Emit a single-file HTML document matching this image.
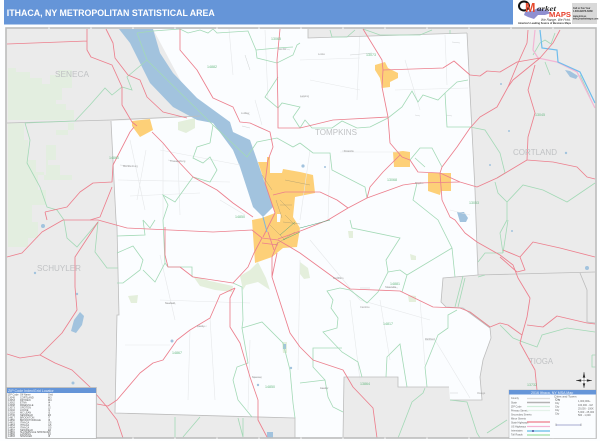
<!DOCTYPE html>
<html><head><meta charset="utf-8"><style>
html,body{margin:0;padding:0;background:#fff;width:600px;height:441px;overflow:hidden}
svg{display:block;filter:blur(.3px)}
text{font-family:"Liberation Sans",sans-serif}
</style></head><body>
<svg width="600" height="441" viewBox="0 0 600 441" xmlns="http://www.w3.org/2000/svg">
<rect width="600" height="441" fill="#fdfeff"/>
<rect x="4" y="0" width="509" height="24.5" fill="#6595d8"/>
<text x="6.8" y="16" font-size="9" font-weight="bold" fill="#fff" textLength="208" lengthAdjust="spacingAndGlyphs">ITHACA, NY METROPOLITAN STATISTICAL AREA</text>
<!-- map base -->
<rect x="6" y="28" width="590" height="410" fill="#ebebeb"/>
<!-- forests on gray -->
<path d="M8,68H16V72H30V78H42V84H50V75H58V70H72V88H62V100H56V104H66V110H74V120H8Z" fill="#e3eee0"/>
<path d="M8,123H24V140H28V160H36V172H44V180H72V175H60V165H48V160H56V135H68V123H74V130H56V145H46V175H38V190H46V205H32V222H8Z" fill="#e3eee0"/>
<path d="M8,222H38V238H28V247H8Z" fill="#e3eee0"/>
<!-- MSA white -->
<path id="msa" d="M153,29 308,29 308,38 467,33 470,100 475,190 476,220 478,275 443,278 441,302 446,307 463,308 490,328 491,338 483,360 480,377 482,400 450,400 449,387 398,387 398,377 344,377 343,438 295,438 295,418 115,413 117,315 119,315 117,227 116,220 111,121 190,117 200,117Z" fill="#fbfdff"/>
<!-- forests in MSA -->
<g fill="#e4efdc">
<path d="M178,122 195,118 195,128 186,133 178,130Z"/>
<path d="M193,276 210,281 233,286 232,292 215,290 200,286Z"/>
<path d="M128,296 138,295 137,303 131,303Z"/>
<path d="M240,276 250,270 258,262 266,278 270,290 258,282 246,285 243,290Z"/>
<path d="M300,262 308,268 310,278 304,279 300,274Z"/>
<path d="M348,231 353,231 353,238 349,238Z"/>
<path d="M408,295 416,296 416,302 409,302Z"/>
<path d="M410,254 416,256 416,260 411,260Z"/>
<path d="M282,342 287,342 287,353 283,353Z"/>
</g>
<!-- urban -->
<g fill="#fdd078">
<path d="M258,162 267,162 267,157 270,157 270,173 282,173 283,169 300,172 313,175 315,193 295,197 293,217 300,228 297,247 283,248 272,257 255,263 252,220 262,218 275,213Z"/>
<path d="M375,65 385,62 388,68 398,73 398,78 390,82 390,87 382,88 380,78 375,70Z"/>
<path d="M393,152 403,151 410,152 410,167 394,167Z"/>
<path d="M428,173 451,173 451,191 441,191 440,195 428,191Z"/>
<path d="M132,121 150,119 153,130 140,137 132,126Z"/>
</g>
<path d="M277,214 281,214 280,222 277,222Z" fill="#fbfdff"/>
<!-- water -->
<g fill="#a2c3de">
<path d="M119,29 153,29 160,53 173,73 197,98 230,122 233,132 250,140 258,163 273,207 263,217 253,207 240,167 233,150 213,123 197,120 173,107 150,83 130,43Z"/>
<path d="M80,312 84,316 82,325 76,333 71,331 74,320Z"/>
<path d="M457,212 464,212 468,218 466,222 460,222Z"/>
<path d="M267,432 273,432 273,438 267,438Z"/>
<path d="M565,70 570,71 578,76 576,79 570,77Z"/>
<path d="M283,344 286,344 286,349 283,349Z"/>
<circle cx="303" cy="166" r="1.6"/><circle cx="325" cy="167" r="1"/><circle cx="512" cy="231" r="1"/><circle cx="566" cy="153" r="1.2"/><circle cx="587" cy="268" r="2"/><circle cx="172" cy="341" r="1.5"/><circle cx="258" cy="385" r="1.2"/><circle cx="291" cy="368" r="1.2"/><circle cx="43" cy="226" r="2"/><circle cx="35" cy="273" r="1.2"/><circle cx="73" cy="383" r="1.5"/><circle cx="77" cy="294" r="1.2"/><circle cx="501" cy="84" r="1"/><circle cx="490" cy="165" r="1"/><circle cx="509" cy="131" r="1"/><circle cx="528" cy="420" r=".8"/>
</g>
<!-- minor roads -->
<g fill="none" stroke="#e6e8ea" stroke-width=".6">
<path d="M229,29 233,75 M146,150 137,200 M163,143 163,220 M178,160 180,215 M118,180 230,182 M130,196 200,193 M300,60 360,58 M360,30 357,100 M395,90 468,88 M310,80 360,90 M405,60 420,110 M445,35 447,85 M310,150 300,220 M330,155 328,220 M340,152 400,152 M450,210 470,215 M160,300 250,303 M190,330 188,400 M210,318 215,400 M160,255 175,320 M125,345 170,345 M250,340 248,410 M300,260 298,370 M350,300 360,380 M420,300 425,365 M380,300 390,360 M435,340 470,398 M360,300 430,320 M310,240 360,300 M265,30 268,100 M255,100 262,125 M130,140 145,210 M160,150 240,165 M220,200 245,215"/>
</g>
<g fill="none" stroke="#c4c6c8" stroke-width=".4">
<path d="M245,55 250,70 M283,48 290,50 M245,113 250,115 M350,55 372,53 M452,42 460,43 M120,165 130,166 M168,160 178,162 M242,126 250,128 M258,127 268,131 M165,303 176,304 M197,327 207,326 M252,377 262,378 M337,277 341,278 M360,288 370,288 M387,287 398,288 M425,340 435,340 M450,393 458,393 M320,388 328,389 M415,115 420,116 M446,115 452,116 M342,151 350,151 M415,183 420,184 M300,97 305,97"/>
</g>
<!-- county lines -->
<g fill="none" stroke="#bdbdbd" stroke-width=".8">
<path d="M7,123 111,120 200,116"/>
<path d="M111,121 116,220 117,227 119,315 117,315 115,413 295,418 295,438"/>
<path d="M308,29 308,38 467,33"/>
<path d="M467,33 475,190 476,220 478,275 595,272"/>
<path d="M478,275 443,278 441,302 446,307 463,308 490,328 491,338 483,360 480,377 482,400 450,400"/>
<path d="M449,387 398,387 398,377 344,377 343,438"/>
<path d="M580,273 587,290 587,322 595,323"/>
</g>
<!-- green zip lines -->
<g fill="none" stroke="#a3d9b6" stroke-width=".8">
<path d="M137,33 147,60 213,125 247,157 257,142 277,138 293,147 300,143"/>
<path d="M137,33 153,31 180,29 188,33 200,30 208,33 213,29 217,33 248,31 256,50 257,58 277,63 293,55 297,45 300,43 M256,50 277,48 293,47"/>
<path d="M278,77 265,97 278,108 282,103 300,107 293,117 300,128"/>
<path d="M25,123 75,121 90,105 105,88 112,95 122,87 132,90 127,77 147,60"/>
<path d="M25,123 30,140 27,163 40,187 47,207 57,210 64,220 67,238 77,247 98,222 95,252 107,268 118,268"/>
<path d="M117,253 133,246 143,260 140,270 123,283 117,283"/>
<path d="M143,220 145,235 117,236 M143,220 150,228 155,220"/>
<path d="M210,143 213,125 M210,143 197,147 193,158 203,163 210,157 217,170 210,182 193,177 175,202 163,195 168,205 163,220 165,263 155,282 143,270"/>
<path d="M168,267 192,267 192,277 M165,263 168,267"/>
<path d="M233,283 242,287 243,320 242,328 262,322 283,343 290,370 293,403 295,418"/>
<path d="M242,328 248,363 237,367 233,380 238,400 252,417"/>
<path d="M200,417 183,437 M175,417 175,438 M238,418 243,437 M243,418 243,437"/>
<path d="M330,30 332,37 347,37 355,30 M363,29 380,35 420,35 432,30 M450,30 450,34"/>
<path d="M468,80 457,82 445,93 438,100 423,95 418,102 412,91 402,107 388,118 370,127 357,128 342,121 332,128 312,128 305,120 300,128"/>
<path d="M445,93 447,127 470,127 485,130 500,153 505,173 497,178 M495,182 498,193 507,202 523,185 543,190 567,202 595,183 M507,202 507,220 500,233 503,253 508,220"/>
<path d="M300,143 313,153 330,153 332,170 365,187 367,198"/>
<path d="M410,160 420,148 432,148 442,167 M415,158 425,167"/>
<path d="M417,183 413,200 438,220 452,248 455,277 M485,275 478,277 M463,276 455,307 M533,55 540,43 545,40 551,44 555,33"/>
<path d="M350,220 352,228 400,238 386,260 388,272 378,292 367,303 350,290 340,288 327,291 333,300 331,308 338,318 337,328 323,332 342,352 358,362 362,377"/>
<path d="M388,272 400,270 407,275 402,292 M407,275 452,248"/>
<path d="M342,348 313,348 313,367 325,380 328,397 333,407 343,412 M325,380 300,383"/>
<path d="M386,377 387,357 400,344 407,387"/>
<path d="M425,367 438,335 448,328 448,315 457,310 M425,367 427,387"/>
<path d="M425,388 423,393 412,402 400,433 398,438 M450,400 467,402 477,433 480,438 M487,433 507,420 M465,278 458,307"/>
<path d="M500,325 513,338 523,342 537,347 542,335 567,328 595,332 M470,312 490,327"/>
<path d="M478,262 485,253 497,253 503,253"/>
<path d="M592,355 592,367 596,367 M592,355 596,355"/>
<path d="M580,75 590,97 M545,62 550,75"/>
</g>
<!-- highways pink/blue -->
<g fill="none" stroke-width="1.2">
<path d="M535,30 533,50 538,58 557,62 577,72 595,108" stroke="#f3b5d4"/>
<path d="M540,30 542,48 557,50 558,62 580,72 595,103" stroke="#6fbdec"/>
</g>
<!-- red roads -->
<g fill="none" stroke="#ec7f8d" stroke-width=".85" stroke-linejoin="round">
<path d="M7,44 87,41 M87,29 87,50 91,57 112,65 122,87 122,105 132,122 137,126"/>
<path d="M106,29 113,43 115,58 128,75 140,80 147,97 163,112 187,118"/>
<path d="M45,212 67,207 80,192 93,183 112,182 113,165 130,132 134,127 M45,212 47,220 M90,220 100,217 112,187"/>
<path d="M152,132 163,143 177,160 193,177 217,190 233,203 253,217"/>
<path d="M180,29 180,50 197,70 213,98 233,107 240,122 250,123 270,132 273,147 268,160"/>
<path d="M280,29 277,60 278,110 278,128 300,128 333,120 388,117"/>
<path d="M363,29 382,60 383,70 382,87 388,117 390,143 402,157"/>
<path d="M383,70 443,68 454,61 470,75 480,76 487,71 500,72 517,62 540,58"/>
<path d="M528,30 527,43 518,63 508,87 497,107 480,117 470,128 457,147 442,167 440,173 442,200 450,217 455,220 465,233 477,242 500,255 513,265 518,278 530,298 527,317 522,335 520,343 535,370 537,390"/>
<path d="M560,30 553,43 540,58 513,80 508,87"/>
<path d="M535,65 528,90 535,113 528,137 527,160 553,162 577,167 587,177 595,179"/>
<path d="M527,160 507,172 497,178 477,187 460,182 440,173 418,172 410,160 402,157"/>
<path d="M400,155 383,172 370,187 367,198 348,208 328,220 303,230 278,239 M300,192 320,192 337,200 348,208 M367,198 403,185 417,183 460,182"/>
<path d="M273,195 285,192 300,192 M268,160 265,183 273,207 275,213 263,237"/>
<path d="M262,238 278,240 290,247 300,253 333,277 350,289 400,291 433,307 460,308 470,312 490,327 500,323 508,325 522,335"/>
<path d="M503,250 520,257 525,270 517,272 500,257 M520,257 533,242 560,248 595,257"/>
<path d="M527,325 543,327 557,316 587,323 595,324"/>
<path d="M300,347 313,360 343,370 353,387 373,408 377,438"/>
<path d="M7,257 22,253 42,232 63,220 98,220 127,228 213,232 252,230 262,238"/>
<path d="M98,222 75,257 75,287 77,310 62,333 40,355 55,363 72,370 90,387 107,407 117,420 123,438"/>
<path d="M7,354 20,358 40,355"/>
<path d="M97,404 108,406 117,400 140,373 153,363 163,360 177,340 190,330 210,318 220,295 235,288"/>
<path d="M165,227 165,255 168,267 180,267 193,277 233,283 248,267 254,253 262,238 M235,288 230,298 230,327 240,343 250,377 258,400 258,420 267,437"/>
<path d="M278,242 272,257 272,277 277,253 M272,277 290,333 300,347"/>
<path d="M262,243 278,245 M268,232 274,250"/>
</g>
<!-- Ithaca detail -->
<g fill="none" stroke="#a99a70" stroke-width=".4"><path d="M280,200 290,210 M285,215 295,225 M270,225 285,240 M275,245 295,232 M283,222 300,224 M280,205 292,205 M276,200 282,218 M262,175 272,190 M285,180 310,185"/></g>
<g fill="none" stroke="#4fa37a" stroke-width=".5"><path d="M280,235 295,222 M283,240 300,232 M300,228 330,220"/></g>
<path d="M263,217 267,232" stroke="#7fb5dc" stroke-width="1" fill="none"/>
<!-- labels -->
<g fill="#c0c2c4" font-size="8">
<text x="55" y="77" textLength="34" lengthAdjust="spacingAndGlyphs">SENECA</text>
<text x="37" y="271" textLength="44" lengthAdjust="spacingAndGlyphs">SCHUYLER</text>
<text x="315" y="135" textLength="42" lengthAdjust="spacingAndGlyphs">TOMPKINS</text>
<text x="513" y="155" textLength="44" lengthAdjust="spacingAndGlyphs">CORTLAND</text>
<text x="529" y="364" textLength="24" lengthAdjust="spacingAndGlyphs" font-size="8.5">TIOGA</text>
</g>
<g fill="#6cbb85" font-size="3.6">
<text x="207" y="68">14882</text><text x="271" y="40">13065</text><text x="366" y="56">13073</text><text x="109" y="159">14860</text><text x="387" y="181">13068</text><text x="535" y="116">13045</text><text x="469" y="204">13053</text><text x="172" y="354">14867</text><text x="265" y="388">14850</text><text x="390" y="285">14881</text><text x="383" y="325">14817</text><text x="360" y="385">13864</text><text x="527" y="386">13732</text><text x="235" y="218">14850</text>
</g>
<g fill="#9a9a9a" font-size="2.6">
<text x="278" y="50">Genoa</text><text x="318" y="55">Locke</text><text x="300" y="97">Lansing</text><text x="241" y="114">Ludlow</text><text x="123" y="167">Mecklenburg</text><text x="170" y="162">Trumansburg</text><text x="344" y="152">Freeville</text><text x="415" y="184">Dryden</text><text x="333" y="279">Brookton</text><text x="385" y="288">Slaterville</text><text x="360" y="308">Caroline</text><text x="425" y="340">Richford</text><text x="320" y="389">Candor</text><text x="477" y="394">Owego</text><text x="165" y="304">Newfield</text><text x="197" y="327">Danby</text><text x="252" y="378">Spencer</text>
</g>
<!-- frame -->
<g fill="none"><rect x="6" y="28" width="590" height="410" stroke="#bcbcbc" stroke-width="1.6"/></g>
<g stroke="#fff" stroke-width="1"><path d="M49,27.5V29M91,27.5V29M133,27.5V29M175,27.5V29M217,27.5V29M259,27.5V29M301,27.5V29M343,27.5V29M385,27.5V29M427,27.5V29M469,27.5V29M511,27.5V29M553,27.5V29M49,437.5V439M91,437.5V439M133,437.5V439M175,437.5V439M217,437.5V439M259,437.5V439M301,437.5V439M343,437.5V439M385,437.5V439M427,437.5V439M469,437.5V439M511,437.5V439M553,437.5V439"/></g>
<!-- compass -->
<g fill="#222"><path d="M584,372 585.500,379 592,380.500 585.500,382 584,388 582.500,382 576,380.500 582.500,379Z"/><circle cx="584" cy="380.500" r="3" fill="#fff"/></g>
<path d="M584,372V388M576,380.500H592" stroke="#333" stroke-width=".4"/>
<!-- left legend -->
<rect x="6.800" y="387.500" width="89.500" height="51" fill="#fbfdff" stroke="#b5b5b5" stroke-width=".8"/>
<rect x="7" y="388" width="89" height="5" fill="#6595d8"/>
<text x="8" y="392" font-size="3.6" fill="#e8f0fb">ZIP Code Index/Grid Locator</text>
<g font-size="2.5" fill="#555">
<text x="8" y="395.500">ZIP Code</text><text x="20" y="395.500">Off Name</text><text x="48" y="395.500">Grid</text>
<text x="8" y="398.500">13045</text><text x="20" y="398.500">CORTLAND</text><text x="48" y="398.500">M3</text>
<text x="8" y="401">13053</text><text x="20" y="401">DRYDEN</text><text x="48" y="401">M4</text>
<text x="8" y="403.500">13062</text><text x="20" y="403.500">ETNA</text><text x="48" y="403.500">I4</text>
<text x="8" y="406">13068</text><text x="20" y="406">FREEVILLE</text><text x="48" y="406">I4</text>
<text x="8" y="408.500">13073</text><text x="20" y="408.500">GROTON</text><text x="48" y="408.500">J2</text>
<text x="8" y="411">13102</text><text x="20" y="411">LOCKE</text><text x="48" y="411">I1</text>
<text x="8" y="413.500">13118</text><text x="20" y="413.500">MC LEAN</text><text x="48" y="413.500">I3</text>
<text x="8" y="416">13736</text><text x="20" y="416">NEWFIELD</text><text x="48" y="416">E5</text>
<text x="8" y="418.500">14817</text><text x="20" y="418.500">BROOKTON</text><text x="48" y="418.500">I7</text>
<text x="8" y="421">14850</text><text x="20" y="421">BROOKTONDALE</text><text x="48" y="421">I6</text>
<text x="8" y="423.500">14851</text><text x="20" y="423.500">ITHACA</text><text x="48" y="423.500">G5</text>
<text x="8" y="426">14853</text><text x="20" y="426">ITHACA</text><text x="48" y="426">G5</text>
<text x="8" y="428.500">14854</text><text x="20" y="428.500">ITHACA</text><text x="48" y="428.500">G5</text>
<text x="8" y="431">14867</text><text x="20" y="431">NEWFIELD</text><text x="48" y="431">E6</text>
<text x="8" y="433">14881</text><text x="20" y="433">SLATERVILLE SPRINGS</text><text x="48" y="433">J6</text>
<text x="8" y="435">14882</text><text x="20" y="435">LANSING</text><text x="48" y="435">F2</text>
<text x="8" y="437">14883</text><text x="20" y="437">SPENCER</text><text x="48" y="437">I8</text>
</g>
<!-- right legend -->
<rect x="509" y="390" width="87" height="48.500" fill="#fbfdff" stroke="#b8b8b8" stroke-width=".6"/>
<rect x="509" y="390" width="87" height="4.500" fill="#6595d8"/>
<text x="531" y="393.800" font-size="3.600" fill="#e8f0fb">2016 Ithaca, NY MSA Map</text>
<g font-size="2.5" fill="#666">
<text x="511" y="399">County</text><text x="511" y="403.500">State</text><text x="511" y="407.500">ZIP Code</text><text x="511" y="411.500">Primary Streets</text><text x="511" y="415.500">Secondary Streets</text><text x="511" y="419.500">Minor Streets</text><text x="511" y="423.500">State Highways</text><text x="511" y="427.500">US Highways</text><text x="511" y="431.500">Interstates</text><text x="511" y="435.500">Toll Roads</text>
<text x="554" y="397.500" font-size="3">Cities and Towns</text>
<text x="555" y="400.500" font-size="3" fill="#222">City</text><text x="555" y="404">City</text><text x="555" y="407.500">City</text><text x="555" y="411">City</text><text x="555" y="414.500">City</text>
<text x="578" y="402">1,000,000+</text><text x="578" y="406">100,000 - 1M</text><text x="578" y="409.500">25,000 - 100K</text><text x="578" y="413">5,000 - 25,000</text><text x="578" y="416">500 - 1,000</text>
</g>
<g fill="none" stroke-width="1.300">
<path d="M527,398.500H550" stroke="#dcdcdc"/>
<path d="M527,402.500H550" stroke="#b3b3b3" stroke-width="1.600"/>
<path d="M527,406.500H550" stroke="#cfeeda"/>
<path d="M527,410.500H550" stroke="#e5f2ea"/>
<path d="M527,422H550" stroke="#ee7d8b"/>
<path d="M527,426.500H550" stroke="#f5b3d2"/>
<path d="M527,431H550" stroke="#62bce8"/>
<path d="M527,435H550" stroke="#9fe0a5"/>
<path d="M556,425H581" stroke="#8b8fc0" stroke-width=".8"/>
<path d="M556,423.500V426M581,423.500V426" stroke="#777" stroke-width=".5"/>
</g>
<circle cx="533" cy="431" r="1" fill="#4a4f9a"/>
<!-- logo -->
<rect x="513" y="0" width="87" height="25" fill="#fff"/>
<rect x="572" y="3" width="25" height="21" fill="#d9d9d9"/>
<g font-size="2.300" fill="#333" font-weight="bold"><text x="573" y="9">Call or Fax Your</text><text x="573" y="12">1-800-MAPS-NOW</text><text x="573" y="17">www.mm.us</text><text x="573" y="19.500">info@marketmaps.com</text></g>
<path d="M525,12 532,11 538,8 546,10 551,13 545,15 538,15 534,19 528,17 524,15Z" fill="#8f8fd0"/>
<ellipse cx="524" cy="6" rx="5" ry="4.500" fill="none" stroke="#111" stroke-width="2"/>
<text x="525" y="12" font-size="12.500" font-weight="bold" fill="#e64a2e">M</text>
<text x="537" y="11" font-size="7.500" font-weight="bold" font-style="italic" fill="#333" textLength="19" lengthAdjust="spacingAndGlyphs" style="font-family:'Liberation Serif',serif">arket</text>
<text x="549" y="16.800" font-size="7.500" font-weight="bold" fill="#e8402c" textLength="22" lengthAdjust="spacingAndGlyphs">MAPS</text>
<text x="541" y="21" font-size="3.200" fill="#444" font-style="italic">We Range. We Print.</text>
<text x="518" y="24" font-size="2.900" fill="#333" font-weight="bold" textLength="53" lengthAdjust="spacingAndGlyphs">America's Leading Source of Business Maps</text>
</svg>
</body></html>
